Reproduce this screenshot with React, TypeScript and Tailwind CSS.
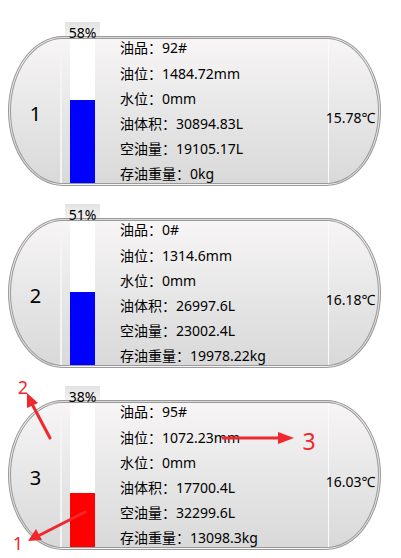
import React from "react";

type Tank = {
  no: number;
  pct: number;
  color: string;
  oil: string;
  level: string;
  water: string;
  vol: string;
  empty: string;
  weight: string;
  temp: string;
};

const tanks: Tank[] = [
  { no: 1, pct: 58, color: "#0000ff", oil: "92#", level: "1484.72mm", water: "0mm", vol: "30894.83L", empty: "19105.17L", weight: "0kg", temp: "15.78℃" },
  { no: 2, pct: 51, color: "#0000ff", oil: "0#", level: "1314.6mm", water: "0mm", vol: "26997.6L", empty: "23002.4L", weight: "19978.22kg", temp: "16.18℃" },
  { no: 3, pct: 38, color: "#ff0000", oil: "95#", level: "1072.23mm", water: "0mm", vol: "17700.4L", empty: "32299.6L", weight: "13098.3kg", temp: "16.03℃" },
];

function TankCard({ t }: { t: Tank }) {
  const rows: [string, string][] = [
    ["油品：", t.oil],
    ["油位：", t.level],
    ["水位：", t.water],
    ["油体积：", t.vol],
    ["空油量：", t.empty],
    ["存油重量：", t.weight],
  ];
  return (
    <div className="relative ml-[8px] w-[373px] h-[150px]">
      <div className="absolute left-[57px] top-[-14px] w-[35px] h-[14px] bg-gradient-to-b from-[#e2e2e2] to-[#f3f3f3]" />
      <div className="relative flex h-full w-full rounded-[55px/75px] border-[3px] border-double border-[#9a9a9a] bg-gradient-to-b from-[#f7f5f5] to-[#d9d9d9]">
        <div className="w-[49px] flex items-center justify-center pt-[6px] text-[20px]">{t.no}</div>
        <div className="w-[2px] bg-[#f4f4f4]" />
        <div className="w-[8px]" />
        <div className="w-[25px] bg-white flex flex-col justify-end">
          <div style={{ height: `${(t.pct * 143) / 100}px`, backgroundColor: t.color }} />
        </div>
        <div className="w-[25px]" />
        <div className="flex-1 flex flex-col justify-center text-[14px] leading-[25.2px] whitespace-nowrap">
          {rows.map(([k, v]) => (
            <div key={k}>
              {k}
              {v}
            </div>
          ))}
        </div>
        <div className="w-px bg-[#fbfbfb]" />
        <div className="w-[49px] relative flex items-center justify-center pt-[12px]">
          <span className="whitespace-nowrap text-[14px] pr-[6px]">{t.temp}</span>
        </div>
      </div>
      <div className="absolute left-[54px] top-[-12px] w-[41px] text-center text-[14px] leading-[18px]">
        {t.pct}%
      </div>
    </div>
  );
}

export default function App() {
  return (
    <div
      className="relative w-[401px] h-[558px] bg-white text-black overflow-hidden"
      style={{ fontFamily: '"Noto Sans", "Noto Sans CJK SC", sans-serif' }}
    >
      <div className="flex flex-col gap-[32px] pt-[36px]">
        {tanks.map((t) => (
          <TankCard key={t.no} t={t} />
        ))}
      </div>
      <svg className="absolute left-0 top-0" width="401" height="558" viewBox="0 0 401 558">
        <g stroke="#f0282d" strokeWidth="3" strokeLinecap="round" fill="#f0282d">
          <line x1="50" y1="438" x2="32" y2="404" />
          <polygon points="27,393 38,403 27,408" stroke="none" />
          <line x1="85" y1="512" x2="38" y2="536" />
          <polygon points="28,541 36,529 42,540" stroke="none" />
          <line x1="223" y1="438" x2="280" y2="438" />
          <polygon points="294,438 278,432 278,444" stroke="none" />
        </g>
        <text x="23" y="394" fill="#f0282d" fontSize="18" textAnchor="middle" fontFamily="Noto Sans, sans-serif">2</text>
        <text x="18" y="550" fill="#f0282d" fontSize="18" textAnchor="middle" fontFamily="Noto Sans, sans-serif">1</text>
        <text x="309" y="450" fill="#f0282d" fontSize="23" textAnchor="middle" fontFamily="Noto Sans, sans-serif">3</text>
      </svg>
    </div>
  );
}
